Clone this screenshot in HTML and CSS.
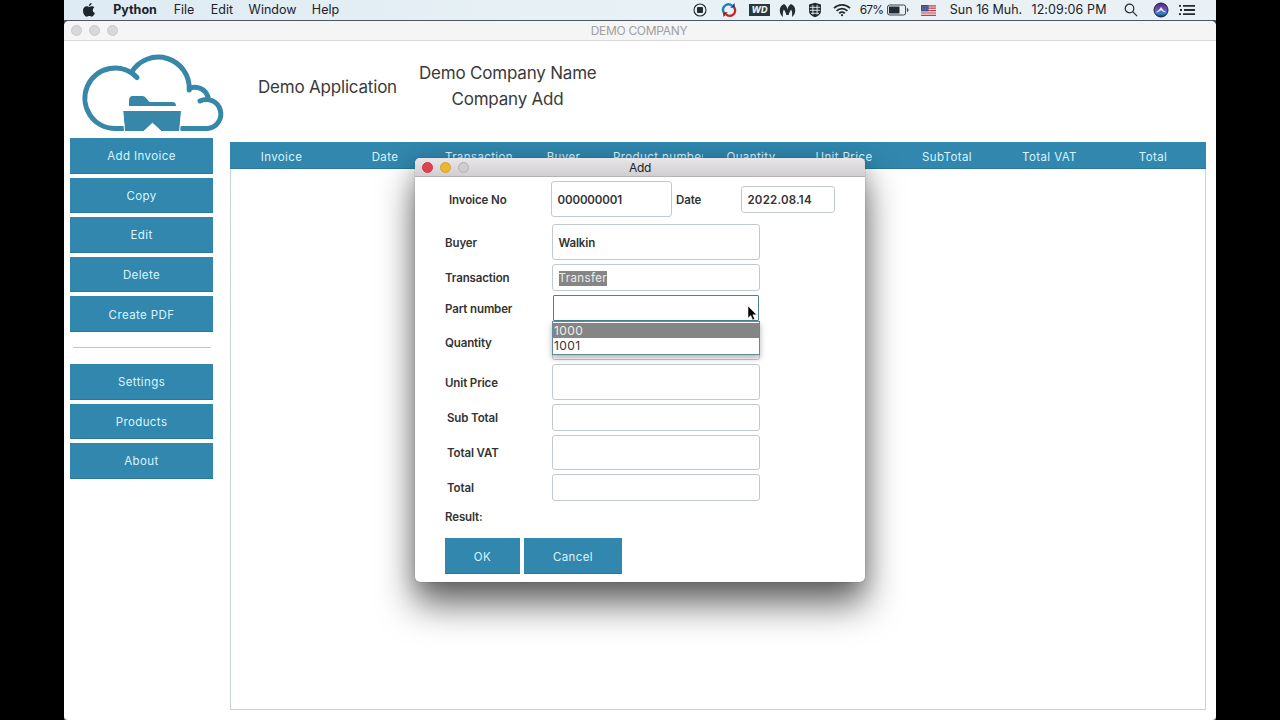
FILE: index.html
```html
<!DOCTYPE html>
<html lang="en">
<head>
  <meta charset="UTF-8" />
  <meta name="viewport" content="width=device-width, initial-scale=1.0"/>
  <title>DEMO COMPANY</title>
  <link rel="stylesheet" href="styles.css">
</head>
<body>
  <div class="desktop">
    <!-- Menu bar -->
    <div class="menubar">
      <div class="menus">
        <svg class="apple" width="14" height="16" viewBox="0 0 14 16" fill="#1d262c">
          <path d="M9.6 1c.1 1.600-1.200 2.900-2.700 3C6.700 2.500 8 1.200 9.600 1zM7.100 4.900c.7 0 1.500-.7 2.700-.7 1.100 0 2 .5 2.600 1.400-2.300 1.400-2 4.500.5 5.500-.5 1.500-1.800 3.600-3.100 3.600-.9 0-1.300-.6-2.500-.6s-1.600.6-2.500.6C3 14.700 1 11.600 1 8.700c0-2.900 1.800-4.500 3.600-4.500 1.100 0 1.900.7 2.500.7z"/>
        </svg>
        <b>Python</b>
        <span>File</span>
        <span>Edit</span>
        <span>Window</span>
        <span>Help</span>
      </div>
      <div class="status">
        <svg width="14" height="14" viewBox="0 0 14 14">
          <circle cx="7" cy="7" r="6" fill="none" stroke="#222c32" stroke-width="1.1"/>
          <rect x="4" y="4" width="6" height="6" rx="1" fill="#222c32"/>
        </svg>
        <svg width="16" height="16" viewBox="0 0 16 16" fill="none" stroke-width="2.400">
          <path d="M2.800 10.500A5.400 5.400 0 0 1 11 3.700" stroke="#1c7fc4"/>
          <path d="M13.200 5.500A5.400 5.400 0 0 1 5 12.400" stroke="#c4262b"/>
          <path d="M9.300 5.800 14 5.800 13.500 1z" fill="#123f86"/>
          <path d="M6.700 10.200 2 10.200 2.500 15z" fill="#8e1417"/>
        </svg>
        <div class="wd">WD</div>
        <svg width="17" height="15" viewBox="0 0 17 15" fill="#222c32">
          <path d="M5 1c2 .9 3 3 3.500 5.500C9 4 10 1.900 12 1c3 1.200 4.500 4 4.200 7-.2 2.500-1.300 4.600-3.200 6 .4-3 .2-5.500-.9-7.500C11 8 10.300 10 9.600 12H7.400C6.700 10 6 8 4.900 6.500 3.800 8.500 3.600 11 4 14 2.100 12.600 1 10.500.8 8 .5 5 2 2.200 5 1z"/>
        </svg>
        <svg width="14" height="16" viewBox="0 0 14 16">
          <path d="M7 .8 13 2.500V9c0 3-2.600 5-6 6.300C3.600 14 1 12 1 9V2.500z" fill="#222c32"/>
          <path d="M1.800 5.300h10.400M1.800 8.300h10.400M3 11.300h8M4.900 3v9.500M9.100 3v9.500" stroke="#e6f0f5" stroke-width=".9"/>
        </svg>
        <svg width="18" height="14" viewBox="0 0 18 14" fill="none" stroke="#222c32" stroke-width="1.800">
          <path d="M1 5.200a11.300 11.300 0 0 1 16 0M3.600 7.900a7.600 7.600 0 0 1 10.800 0M6.200 10.400a4 4 0 0 1 5.600 0"/>
          <circle cx="9" cy="12.200" r="1.100" fill="#222c32" stroke="none"/>
        </svg>
        <span class="percent">67%</span>
        <svg width="22" height="12" viewBox="0 0 22 12">
          <rect x=".6" y="1" width="18" height="10" rx="2" fill="none" stroke="#39434a"/>
          <rect x="2" y="2.500" width="10.500" height="7" fill="#222c32"/>
          <path d="M20 4v4q1.500-.6 1.500-2T20 4z" fill="#39434a"/>
        </svg>
        <svg width="15" height="11" viewBox="0 0 15 11">
          <rect width="15" height="11" fill="#f3e7e9"/>
          <path d="M0 .8h15M0 3.200h15M0 5.600h15M0 8h15M0 10.300h15" stroke="#c4404d" stroke-width="1.200"/>
          <rect width="7.500" height="6.200" fill="#394a86"/>
          <path d="M1 1.700h6M1 3.200h6M1 4.700h6" stroke="#a9b3d4" stroke-width=".6" stroke-dasharray=".8 .8"/>
        </svg>
        <span>Sun 16 Muh.</span>
        <span class="clock">12:09:06 PM</span>
        <svg width="14" height="14" viewBox="0 0 14 14" fill="none" stroke="#222c32" stroke-width="1.200">
          <circle cx="5.500" cy="5.500" r="4.300"/>
          <path d="m8.700 8.700 4.400 4.400"/>
        </svg>
        <svg width="16" height="16" viewBox="0 0 16 16">
          <defs>
            <linearGradient id="siri" x1="0" y1="0" x2="0" y2="1">
              <stop offset="0" stop-color="#4b2a78"/>
              <stop offset=".45" stop-color="#7a4bb4"/>
              <stop offset=".75" stop-color="#2a86c8"/>
              <stop offset="1" stop-color="#14305e"/>
            </linearGradient>
          </defs>
          <circle cx="8" cy="8" r="7" fill="url(#siri)" stroke="#1e2340" stroke-width="1"/>
          <path d="M2.500 10.500Q6 9 8 5q2 4 5.500 5.500Q10 10 8 8.300 6 10 2.500 10.500z" fill="#dff4fb"/>
        </svg>
        <svg width="17" height="12" viewBox="0 0 17 12" stroke="#222c32" stroke-width="1.800">
          <path d="M0 1.800h2M4 1.800h12M1 6h2M5 6h11M0 10.200h2M4 10.200h12"/>
        </svg>
      </div>
    </div>

    <!-- Main window -->
    <div class="window">
      <div class="titlebar">
        <div class="lights"><i></i><i></i><i></i></div>
        <span>DEMO COMPANY</span>
      </div>

      <div class="body">
        <div class="sidebar">
          <svg class="logo" width="150" height="97" viewBox="14 1 150 97" fill="none" stroke="#3687a8" stroke-width="5" stroke-linecap="round">
            <path d="M73 37.500A30.200 30.200 0 1 0 51 88.500H59" />
            <path d="M67.500 32.500A31 31 0 0 1 125.200 50"/>
            <path d="M125.500 48.500A13.500 13.500 0 0 1 144 57"/>
            <path d="M136 61A14.500 14.500 0 1 1 143.500 88.500H118"/>
            <path d="M65 66V60q.5-4 3.500-4h10q2 0 3.500 2l3 3.500q.8.500 2 .500h21.500q3.500 0 3.500 4z" fill="#3687a8" stroke="none"/>
            <path d="M59 70.500h58.500L115.600 91.500H97.500l-9-8.200-9 8.200H61z" fill="#3687a8" stroke="#fff" stroke-width="1"/>
          </svg>
          <button>Add Invoice</button>
          <button>Copy</button>
          <button>Edit</button>
          <button>Delete</button>
          <button>Create PDF</button>
          <div class="divider"></div>
          <button>Settings</button>
          <button>Products</button>
          <button>About</button>
        </div>

        <div class="main">
          <div class="header">
            <div class="app-title">Demo Application</div>
            <div class="company">
              <div>Demo Company Name</div>
              <div>Company Add</div>
            </div>
          </div>
          <div class="table">
            <div class="thead">
              <span>Invoice</span>
              <span>Date</span>
              <span>Transaction</span>
              <span>Buyer</span>
              <span class="clipped"><em>Product number</em></span>
              <span>Quantity</span>
              <span>Unit Price</span>
              <span>SubTotal</span>
              <span>Total VAT</span>
              <span>Total</span>
            </div>
          </div>
        </div>
      </div>
    </div>

    <!-- Add dialog -->
    <div class="dialog">
      <div class="dialog-bar">
        <div class="lights"><i class="red"></i><i class="yellow"></i><i class="off"></i></div>
        <span>Add</span>
      </div>
      <div class="dialog-body">
        <div class="top-row">
          <label>Invoice No</label>
          <div class="field">000000001</div>
          <label>Date</label>
          <div class="field date">2022.08.14</div>
        </div>
        <div class="form">
          <label>Buyer</label>
          <div class="field">Walkin</div>
          <label>Transaction</label>
          <div class="field"><span class="selected">Transfer</span></div>
          <label>Part number</label>
          <div class="field combo">
            <div class="options">
              <div class="active">1000</div>
              <div>1001</div>
            </div>
            <svg class="cursor" width="11" height="17" viewBox="0 0 11 17">
              <path d="M1 1v12l2.800-2.500 1.900 4.400 2-.9-1.900-4.200h3.800z" fill="#000" stroke="#fff" stroke-width=".5"/>
            </svg>
          </div>
          <label>Quantity</label>
          <div class="field"></div>
          <label>Unit Price</label>
          <div class="field"></div>
          <label class="indent">Sub Total</label>
          <div class="field"></div>
          <label class="indent">Total VAT</label>
          <div class="field"></div>
          <label class="indent">Total</label>
          <div class="field"></div>
        </div>
        <div class="result">Result:</div>
        <div class="actions">
          <button class="ok">OK</button>
          <button class="cancel">Cancel</button>
        </div>
      </div>
    </div>
  </div>
</body>
</html>
```
FILE: styles.css
```css
* {
  margin: 0;
  padding: 0;
  box-sizing: border-box;
}
html, body {
  height: 100%;
  width: 100%;
  overflow: hidden;
  background: #000;
  font-family: Inter, 'Liberation Sans', sans-serif;
}
.desktop {
  position: relative;
  width: 1152px;
  height: 720px;
  margin: 0 auto;
  background: #4b5a60;
  display: flex;
  flex-direction: column;
}

/* menu bar */
.menubar {
  height: 20px;
  flex: none;
  background: linear-gradient(90deg, #deebf4, #e8f1f5 50%, #eaf1f6);
  display: flex;
  justify-content: space-between;
  align-items: center;
  font-size: 12.5px;
  line-height: 20px;
  color: #1b2328;
  white-space: nowrap;
}
.menus {
  display: grid;
  grid-template-columns: 14px 78px 20px 56px 45px 61px;
  padding-left: 18px;
  justify-items: center;
  align-items: center;
}
.status {
  display: grid;
  grid-template-columns: 28px 30px 31px 25px 29px 25px 33px 22px 38px 78px 88px 36px 24px 28px;
  justify-items: center;
  align-items: center;
  padding-right: 15px;
}
.percent {
  padding-left: 2px;
  font-size: 12px;
  letter-spacing: -0.8px;
}
.clock {
  letter-spacing: 0.1px;
}
.wd {
  width: 21px;
  height: 12px;
  background: #2c363d;
  color: #e6f0f5;
  font-size: 9px;
  font-weight: 800;
  font-style: italic;
  line-height: 12px;
  text-align: center;
}

/* main window */
.window {
  flex: 1;
  margin-top: 1px;
  background: #fff;
  border-radius: 5px 5px 4px 4px;
  display: flex;
  flex-direction: column;
  overflow: hidden;
}
.titlebar {
  height: 20px;
  flex: none;
  background: #f5f5f5;
  border-bottom: 1px solid #d9d9d9;
  display: grid;
  grid-template-columns: 64px 1fr 64px;
  align-items: center;
  text-align: center;
  font-size: 12px;
  letter-spacing: -0.3px;
  color: #a0a0a0;
}
.titlebar span {
  padding-right: 2px;
}
.lights {
  display: flex;
  gap: 7px;
  padding-left: 7px;
}
.lights i {
  width: 11px;
  height: 11px;
  border-radius: 50%;
  background: #d8d8d8;
  border: 1px solid #c9c9c9;
}
.lights .red {
  background: #e2404e;
  border-color: #cf3744;
}
.lights .yellow {
  background: #f0b530;
  border-color: #d9a02b;
}
.lights .off {
  background: #cfcdcf;
  border-color: #b3b1b3;
}
.body {
  flex: 1;
  display: flex;
}
.sidebar {
  width: 166px;
  padding-left: 6px;
  display: flex;
  flex-direction: column;
}
.logo {
  flex: none;
  margin-left: 8px;
}
button {
  padding-top: 2px;
  border: none;
  border-bottom: 1px solid #2a7898;
  background: #3187ae;
  color: #d9f6ff;
  font-family: inherit;
  font-size: 11.5px;
  letter-spacing: 0.4px;
}
.sidebar button {
  width: 143px;
  height: 35.6px;
  margin-bottom: 4px;
  flex: none;
}
.divider {
  width: 138px;
  height: 1px;
  margin: 11px 0 16px 3px;
  background: #c4c4c8;
}
.main {
  flex: 1;
  display: flex;
  flex-direction: column;
  padding: 0 10px 10px 0;
}
.header {
  height: 101px;
  flex: none;
  display: flex;
  padding: 19px 0 0 28px;
  gap: 22px;
  font-size: 17px;
  line-height: 26px;
  letter-spacing: -0.2px;
  color: #3a3a3a;
  white-space: nowrap;
}
.app-title {
  width: 139px;
  padding-top: 14px;
}
.company {
  width: 177px;
  text-align: center;
}
.table {
  flex: 1;
  border: 1px solid #cbd3d6;
  border-top: none;
}
.thead {
  height: 27px;
  margin: 0 -1px;
  display: grid;
  grid-template-columns: 103px 104px 84px 85px 103px 84px 102px 104px 101px 1fr;
  background: #3187ae;
  border-bottom: 1px solid #2a7898;
  color: #d9f6ff;
  font-size: 11.5px;
  line-height: 30px;
  letter-spacing: 0.4px;
  text-align: center;
  white-space: nowrap;
}
.clipped {
  padding: 0 6px 0 7px;
}
.clipped em {
  display: block;
  overflow: hidden;
  font-style: normal;
  text-align: left;
}

/* add dialog, floats over the main window */
.dialog {
  position: absolute;
  left: 351px;
  top: 158px;
  width: 450px;
  height: 424px;
  background: #fff;
  border-radius: 5px;
  box-shadow: 0 0 1px rgba(0, 0, 0, 0.6), 0 22px 36px rgba(0, 0, 0, 0.6), 0 4px 20px rgba(0, 0, 0, 0.15);
}
.dialog-bar {
  height: 19px;
  display: grid;
  grid-template-columns: 64px 1fr 64px;
  align-items: center;
  text-align: center;
  border-radius: 5px 5px 0 0;
  border-bottom: 1px solid #b5b3b5;
  background: linear-gradient(#e8e6e8, #d0ced0);
  font-size: 12px;
  letter-spacing: -0.3px;
  color: #222;
}
.dialog-body {
  padding: 4px 30px 0;
  font-size: 11.5px;
  font-weight: 600;
  color: #333;
  letter-spacing: -0.12px;
}
.dialog-body label {
  padding-top: 1px;
}
.top-row {
  display: grid;
  grid-template-columns: 98px 121px 61px 94px;
  gap: 4px;
  align-items: center;
  height: 36px;
  padding-left: 4px;
  margin-bottom: 7px;
}
.field {
  position: relative;
  height: 100%;
  padding: 1px 0 0 5.5px;
  border: 1px solid #c3cacf;
  border-radius: 3px;
  background: #fff;
  display: flex;
  align-items: center;
}
.top-row .date {
  height: 27px;
  letter-spacing: 0.2px;
}
.form {
  display: grid;
  grid-template-columns: 107px 208px;
  grid-template-rows: 36px 27px 26px 35px 36px 27px 35px 27px;
  row-gap: 4px;
  align-items: center;
}
.form .indent {
  padding-left: 2px;
}
.selected {
  background: #858585;
  color: #eee;
  font-size: 11.5px;
  font-weight: 400;
  line-height: 15px;
  letter-spacing: 0.4px;
}
.combo {
  z-index: 2;
  margin: 0 1px;
  border-color: #4f8196;
  border-radius: 1px;
}
.options {
  position: absolute;
  left: -2px;
  top: 25px;
  width: 208px;
  height: 34px;
  padding-top: 1px;
  background: #fff;
  border: 1px solid #5f8c9d;
  box-shadow: 0 3px 6px rgba(0, 0, 0, 0.3);
  font-size: 12px;
  font-weight: 400;
  line-height: 15px;
  letter-spacing: 0.4px;
}
.options div {
  padding-left: 1px;
}
.options .active {
  background: #858585;
  color: #eee;
}
.cursor {
  position: absolute;
  left: 193px;
  top: 9px;
}
.result {
  margin-top: 8px;
  line-height: 16px;
}
.actions {
  display: flex;
  gap: 4px;
  margin-top: 13px;
}
.actions button {
  height: 36px;
}
.ok {
  width: 75px;
}
.cancel {
  width: 98px;
}
```
